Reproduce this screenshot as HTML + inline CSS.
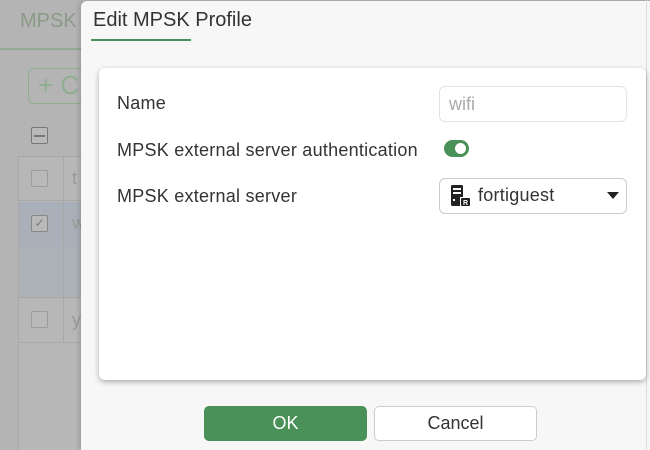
<!DOCTYPE html>
<html style="overflow:hidden"><head><style>
*{box-sizing:border-box;margin:0;padding:0}
html,body{width:650px;height:450px;overflow:hidden}
body{background:#b4b4b4;font-family:"Liberation Sans",sans-serif;position:relative}
.abs{position:absolute}
.cb{position:absolute;width:17px;height:17px;border:1px solid #9c9c9c;border-radius:2px;background:#b9b9b9}
.lb{font-size:18px;letter-spacing:0.25px;color:#333}
</style></head><body>
<div class="abs" style="left:20px;top:10px;font-size:20px;color:#8b9a87">MPSK</div>
<div class="abs" style="left:0;top:48px;width:90px;height:2px;background:#93ab93"></div>
<div class="abs" style="left:28px;top:68px;width:70px;height:36px;border:1px solid #8fae8f;border-radius:6px"></div>
<div class="abs" style="left:38px;top:70px;font-size:26px;color:#8fae8f">+ C</div>
<div class="cb" style="left:31px;top:127px;border-color:#777"><div style="margin:7px 2px 0;height:2px;background:#777"></div></div>
<div class="abs" style="left:18px;top:156px;width:70px;height:294px;border-left:1px solid #a8a8a8;background:#b7b7b7"></div>
<div class="abs" style="left:18px;top:156px;width:70px;height:45px;border-bottom:1px solid #a8a8a8;border-top:1px solid #a8a8a8"></div>
<div class="abs" style="left:19px;top:202px;width:70px;height:45px;background:#a9b0b9"></div>
<div class="abs" style="left:19px;top:247px;width:70px;height:51px;background:#adb2b8;border-bottom:1px solid #a8a8a8"></div>
<div class="abs" style="left:18px;top:342px;width:70px;height:1px;background:#a8a8a8"></div>
<div class="abs" style="left:63px;top:156px;width:1px;height:187px;background:#a8a8a8"></div>
<div class="cb" style="left:31px;top:170px"></div>
<div class="cb" style="left:31px;top:215px;border-color:#888;color:#777;font-size:12px;line-height:14px;text-align:center">✓</div>
<div class="cb" style="left:31px;top:311px"></div>
<div class="abs" style="left:72px;top:168px;font-size:18px;color:#999">t</div>
<div class="abs" style="left:72px;top:213px;font-size:18px;color:#999">w</div>
<div class="abs" style="left:72px;top:310px;font-size:18px;color:#999">y</div>

<div class="abs" style="left:81px;top:1px;width:569px;height:449px;background:#f7f7f7;border-radius:6px 0 0 0;box-shadow:-2px 0 4px rgba(0,0,0,.15)"></div>
<div class="abs" style="left:93px;top:9px;font-size:20px;color:#333">Edit MPSK Profile</div>
<div class="abs" style="left:91px;top:39px;width:100px;height:2px;background:#4a9159"></div>
<div class="abs" style="left:646px;top:0;width:1px;height:450px;background:#ddd"></div>

<div class="abs" style="left:99px;top:68px;width:547px;height:312px;background:#fff;border-radius:6px;box-shadow:0 2px 6px rgba(0,0,0,.3)"></div>
<div class="abs lb" style="left:117px;top:93px">Name</div>
<div class="abs lb" style="left:117px;top:140px">MPSK external server authentication</div>
<div class="abs lb" style="left:117px;top:186px">MPSK external server</div>
<div class="abs" style="left:439px;top:86px;width:188px;height:36px;border:1px solid #e3e3e3;border-radius:6px;padding:7px 9px;font-size:18px;color:#aaa">wifi</div>
<div class="abs" style="left:444px;top:140px;width:25px;height:17px;border-radius:9px;background:#4a9159"><div style="position:absolute;right:3px;top:3px;width:11px;height:11px;border-radius:50%;background:#fff"></div></div>
<div class="abs" style="left:439px;top:178px;width:188px;height:36px;border:1px solid #ccc;border-radius:6px"></div>
<svg class="abs" style="left:451px;top:185px" width="22" height="22" viewBox="0 0 22 22"><rect x="0" y="0" width="12" height="21" rx="1.5" fill="#222"/><rect x="2" y="3" width="8" height="2" fill="#fff"/><rect x="2" y="7" width="8" height="2" fill="#fff"/><rect x="2" y="14" width="2" height="2" fill="#fff"/><rect x="9" y="12" width="11" height="10" fill="#fff"/><rect x="10" y="13" width="9" height="8" rx="1" fill="#222"/><text x="12" y="20" font-size="7" fill="#fff" font-family="Liberation Sans" font-weight="bold">R</text></svg>
<div class="abs lb" style="left:478px;top:185px">fortiguest</div>
<div class="abs" style="left:607px;top:192px;width:0;height:0;border-left:6px solid transparent;border-right:6px solid transparent;border-top:7px solid #222"></div>

<div class="abs" style="left:204px;top:406px;width:163px;height:35px;background:#4a9159;border-radius:5px;color:#fff;font-size:18px;text-align:center;line-height:35px">OK</div>
<div class="abs" style="left:374px;top:406px;width:163px;height:35px;background:#fff;border:1px solid #ccc;border-radius:5px;color:#333;font-size:18px;text-align:center;line-height:33px">Cancel</div>
</body></html>
